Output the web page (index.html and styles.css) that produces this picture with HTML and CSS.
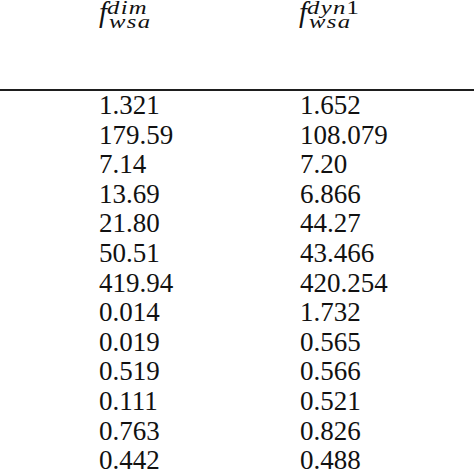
FILE: index.html
```html
<!DOCTYPE html>
<html>
<head>
<meta charset="utf-8">
<link rel="stylesheet" href="styles.css">
</head>
<body>
<div class="table">
  <div class="head">
    <div class="hcell">
      <span class="f">f</span>
      <span class="scripts"><span class="sup">dim</span><span class="sub">wsa</span></span>
    </div>
    <div class="hcell">
      <span class="f">f</span>
      <span class="scripts"><span class="sup">dyn<span class="up">1</span></span><span class="sub">wsa</span></span>
    </div>
  </div>
  <div class="rule"></div>
  <div class="rows">
    <div>1.321</div><div>1.652</div>
    <div>179.59</div><div>108.079</div>
    <div>7.14</div><div>7.20</div>
    <div>13.69</div><div>6.866</div>
    <div>21.80</div><div>44.27</div>
    <div>50.51</div><div>43.466</div>
    <div>419.94</div><div>420.254</div>
    <div>0.014</div><div>1.732</div>
    <div>0.019</div><div>0.565</div>
    <div>0.519</div><div>0.566</div>
    <div>0.111</div><div>0.521</div>
    <div>0.763</div><div>0.826</div>
    <div>0.442</div><div>0.488</div>
  </div>
</div>
</body>
</html>
```
FILE: styles.css
```css
html, body {
  margin: 0;
  padding: 0;
  background: #ffffff;
}
body {
  font-family: "Liberation Serif", "Times New Roman", serif;
  color: #111111;
  width: 474px;
  height: 474px;
  overflow: hidden;
}
.head {
  height: 89px;
  display: grid;
  grid-template-columns: 200px 1fr;
  padding-left: 99px;
}
.hcell {
  display: flex;
  align-items: flex-start;
}
.f {
  font-style: italic;
  font-size: 29px;
  line-height: 24px;
}
.scripts {
  display: flex;
  flex-direction: column;
  margin-left: 0;
  font-size: 19px;
  font-style: italic;
  letter-spacing: 1px;
  transform: scaleX(1.3);
  transform-origin: left center;
}
.sup {
  line-height: 16.2px;
  white-space: nowrap;
}
.sub {
  line-height: 11.4px;
  margin-left: 1.5px;
  white-space: nowrap;
}
.up {
  font-style: normal;
}
.rule {
  height: 2px;
  background: #1e1e1e;
}
.rows {
  display: grid;
  grid-template-columns: 201px 1fr;
  padding-left: 99px;
  font-size: 27px;
  line-height: 29.6px;
}
```
